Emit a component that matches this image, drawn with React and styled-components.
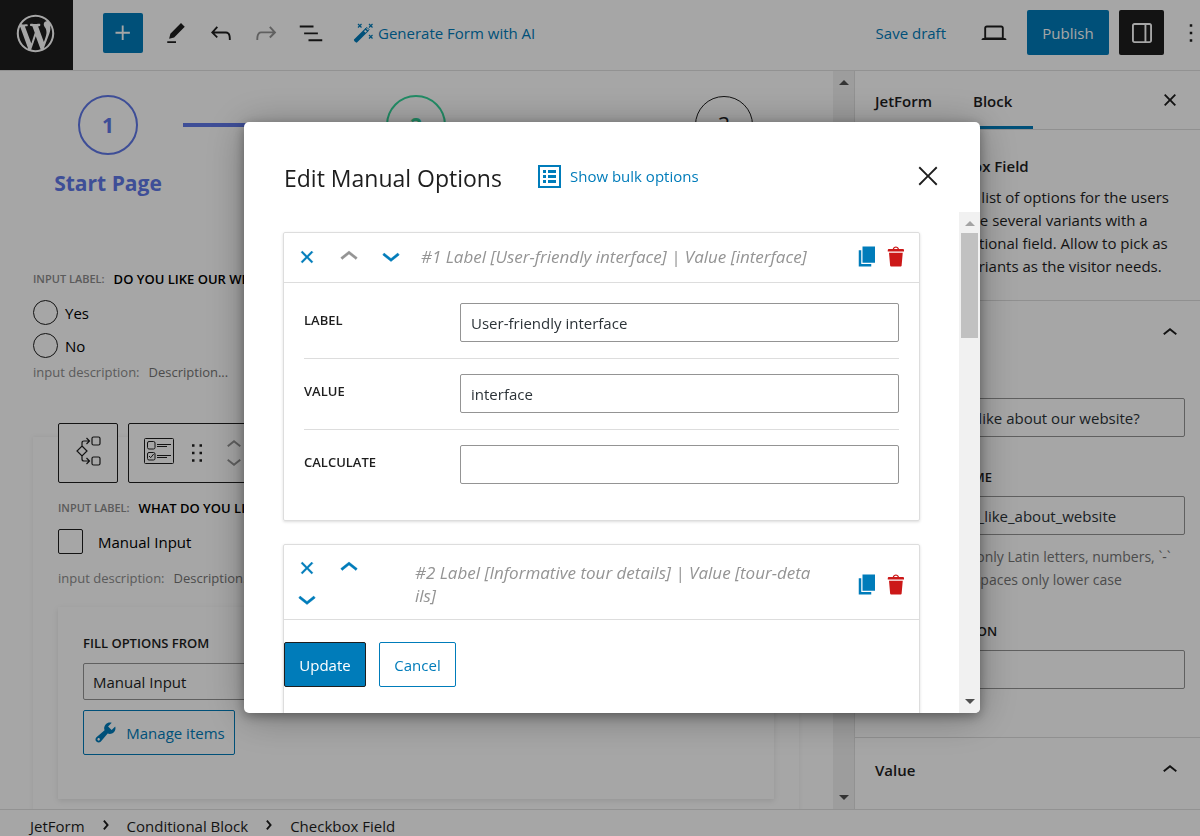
import { useState } from 'react';
import styled, { createGlobalStyle, css } from 'styled-components';

const icons = {
    wordpress: 'M20 10c0-5.51-4.49-10-10-10C4.48 0 0 4.49 0 10c0 5.52 4.48 10 10 10 5.51 0 10-4.48 10-10zM7.78 15.37L4.37 6.22c.55-.02 1.17-.08 1.17-.08.5-.06.44-1.13-.06-1.11 0 0-1.45.11-2.37.11-.18 0-.37 0-.58-.01C4.12 2.69 6.87 1.11 10 1.11c2.33 0 4.45.87 6.05 2.34-.68-.11-1.65.39-1.65 1.58 0 .74.45 1.36.9 2.1.35.61.55 1.36.55 2.46 0 1.49-1.4 5-1.4 5l-3.03-8.37c.54-.02.82-.17.82-.17.5-.05.44-1.25-.06-1.22 0 0-1.44.12-2.38.12-.87 0-2.33-.12-2.33-.12-.5-.03-.56 1.2-.06 1.22l.92.08 1.26 3.41zM17.41 10c.24-.64.74-1.87.43-4.25.7 1.29 1.05 2.71 1.05 4.25 0 3.29-1.73 6.24-4.4 7.78.97-2.59 1.94-5.2 2.92-7.78zM6.1 18.09C3.12 16.65 1.11 13.53 1.11 10c0-1.3.23-2.48.72-3.59C3.25 10.3 4.67 14.2 6.1 18.09zm4.03-6.63l2.58 6.98c-.86.29-1.76.45-2.71.45-.79 0-1.57-.11-2.29-.33.81-2.38 1.62-4.74 2.42-7.1z',
    plus: 'M11 12.5V17.5H12.5V12.5H17.5V11H12.5V6H11V11H6V12.5H11Z',
    pencil: 'm19 7-3-3-8.5 8.5-1 4 4-1L19 7Zm-7 11.5H5V20h7v-1.5Z',
    undo: 'M18.3 11.7c-.6-.6-1.4-.9-2.3-.9H6.7l2.9-3.3-1.1-1-4.5 5L8.5 16l1-1-2.7-2.7H16c.5 0 .9.2 1.3.5 1 1 1 3.4 1 4.5v.3h1.5v-.2c0-1.5 0-4.3-1.5-5.7z',
    redo: 'M15.6 6.5l-1.1 1 2.9 3.3H8c-.9 0-1.7.3-2.3.9-1.4 1.5-1.4 4.2-1.4 5.6v.2h1.5v-.3c0-1.1 0-3.5 1-4.5.3-.3.7-.5 1.3-.5h9.2L14.5 15l1.1 1.1 4.6-4.6-4.6-5z',
    listView: 'M3 6h11v1.5H3V6Zm3.5 5.5h11V13h-11v-1.5ZM21 17H10v1.5h11V17Z',
    laptop: 'M20.5 16h-.7V8c0-1.1-.9-2-2-2H6.2c-1.1 0-2 .9-2 2v8h-.7c-.8 0-1.5.7-1.5 1.5h20c0-.8-.7-1.5-1.5-1.5zM5.7 8c0-.3.2-.5.5-.5h11.6c.3 0 .5.2.5.5v7.6H5.7V8z',
    drawer: 'M18 4H6c-1.1 0-2 .9-2 2v12c0 1.1.9 2 2 2h12c1.1 0 2-.9 2-2V6c0-1.1-.9-2-2-2zm-4 14.5H6c-.3 0-.5-.2-.5-.5V6c0-.3.2-.5.5-.5h8v13zm4.5-.5c0 .3-.2.5-.5.5h-2.5v-13H18c.3 0 .5.2.5.5v12z',
    more: 'M13 19h-2v-2h2v2zm0-6h-2v-2h2v2zm0-6h-2V5h2v2z',
    closeSmall: 'M12 13.06l3.712 3.713 1.061-1.06L13.061 12l3.712-3.712-1.06-1.06L12 10.938 8.288 7.227l-1.061 1.06L10.939 12l-3.712 3.712 1.06 1.061L12 13.061z',
    close: 'm13.06 12 6.47-6.47-1.06-1.06L12 10.94 5.53 4.47 4.47 5.53 10.94 12l-6.47 6.47 1.06 1.06L12 13.06l6.47 6.47 1.06-1.06L13.06 12Z',
    up: 'M6.5 12.4L12 8l5.5 4.4-.9 1.2L12 10l-4.5 3.6-1-1.2z',
    down: 'M17.5 11.6L12 16l-5.5-4.4.9-1.2L12 14l4.5-3.6 1 1.2z',
    right: 'M10.86 8.04 14.28 12.03 10.86 16.02 9.72 15.04 12.3 12.03 9.72 9.02Z',
    drag: 'M8 7h2V5H8v2zm0 6h2v-2H8v2zm0 6h2v-2H8v2zm6-14v2h2V5h-2zm0 8h2v-2h-2v2zm0 6h2v-2h-2v2z',
    copy: 'M6 15V2h10v13H6zm-1 1h8v2H3V5h2v11z',
    trash: 'M12 4h3c.6 0 1 .4 1 1v1H3V5c0-.6.5-1 1-1h3c.2-1.1 1.3-2 2.5-2s2.3.9 2.5 2zM8 4h3c-.2-.6-.9-1-1.5-1S8.2 3.4 8 4zM4 7h11l-.9 10.1c0 .5-.5.9-1 .9H5.9c-.5 0-.9-.4-1-.9L4 7z',
    wrench: 'M16.68 9.77c-1.34 1.34-3.3 1.67-4.95.99l-5.41 6.52c-.99.99-2.59.99-3.58 0s-.99-2.59 0-3.57l6.52-5.42c-.68-1.65-.35-3.61.99-4.95 1.28-1.28 3.12-1.62 4.72-1.06l-2.89 2.89 2.82 2.82 2.86-2.87c.53 1.58.18 3.39-1.08 4.65zM3.81 16.21c.4.39 1.04.39 1.43 0 .4-.4.4-1.04 0-1.43-.39-.4-1.03-.4-1.43 0-.39.39-.39 1.03 0 1.43z',
};

function Icon({ name, size = 30, box = '0 0 24 24' }) {
    return (
        <Svg width={size} height={size} viewBox={box} aria-hidden="true">
            <path d={icons[name]} fillRule="evenodd" />
        </Svg>
    );
}

function WandIcon() {
    return (
        <Svg width="22" height="22" viewBox="0 0 22 22" aria-hidden="true">
            <path d="M1 17.6 12.6 6l3 3L4 20.6c-.8.6-3.8-2-3-3zM12.2 8 11 9.2l1.5 1.5L14 9.3z" fillRule="evenodd" />
            <path d="m12 7 2-1.5L16 7.5l-1.5 2" fill="none" stroke="currentColor" />
            <path
                d="m5 2 3.5 3.5m0-3.5L5 5.5M16 2l3.5 3.5m0-3.5L16 5.5M16 13l3.5 3.5m0-3.5L16 16.5"
                fill="none"
                stroke="currentColor"
                strokeWidth="1.2"
            />
        </Svg>
    );
}

function BulkIcon() {
    return (
        <Svg width="23" height="23" viewBox="0 0 23 23" aria-hidden="true">
            <path d="M0 0h23v23H0zM2 2v19h19V2zM5 5h3v3H5zM10 5h8v3h-8zM5 10h3v3H5zM10 10h8v3h-8zM5 15h3v3H5zM10 15h8v3h-8z" fillRule="evenodd" />
        </Svg>
    );
}

function BranchIcon() {
    return (
        <Svg width="26" height="30" viewBox="0 0 26 30" aria-hidden="true">
            <g fill="none" stroke="currentColor" strokeWidth="1.2">
                <path d="m6 10 5 5-5 5-5-5zM6 10V7q0-2 2-2h5M10.5 2 13.5 5l-3 3M6 20v3q0 2 2 2h5M10.5 22l3 3-3 3" />
                <rect x="16" y="1" width="8" height="8" rx="1.5" />
                <rect x="16" y="21" width="8" height="8" rx="1.5" />
            </g>
        </Svg>
    );
}

function CheckListIcon() {
    return (
        <Svg width="30" height="26" viewBox="0 0 30 26" aria-hidden="true">
            <g fill="none" stroke="currentColor">
                <rect x=".5" y=".5" width="29" height="25" rx="1" />
                <rect x="3.5" y="3.5" width="7.5" height="7.5" rx="1.5" />
                <rect x="3.5" y="14.5" width="7.5" height="7.5" rx="1.5" />
                <path d="m5 18 1.7 1.7 3-3.7M13 6.5h14M13 8.5h10M13 17.5h14M13 19.5h10" />
            </g>
        </Svg>
    );
}

function Scrollbar({ offset }) {
    return (
        <Track aria-hidden="true">
            <ArrowUp $muted={offset} />
            {offset && <Thumb />}
            <ArrowDown />
        </Track>
    );
}

function OptionRow({ id, label, value }) {
    const [text, setText] = useState(value);

    return (
        <Row>
            <FieldLabel htmlFor={id}>{label}</FieldLabel>
            <TextInput id={id} value={text} onChange={(e) => setText(e.target.value)} />
        </Row>
    );
}

function OptionCard({ title, first, stacked, children }) {
    return (
        <Card>
            <CardHead $stacked={stacked}>
                <Movers $stacked={stacked}>
                    <CardButton aria-label="Close item"><Icon name="closeSmall" /></CardButton>
                    <CardButton aria-label="Move up" disabled={first}><Icon name="up" size={36} /></CardButton>
                    <CardButton aria-label="Move down"><Icon name="down" size={36} box="0 1 24 24" /></CardButton>
                </Movers>
                <CardTitle>{title}</CardTitle>
                <CardActions>
                    <ActionButton aria-label="Clone"><Icon name="copy" size={25} box="0 0 20 20" /></ActionButton>
                    <ActionButton aria-label="Delete" $danger><Icon name="trash" size={25} box="0 0 20 20" /></ActionButton>
                </CardActions>
            </CardHead>
            <CardBody>{children}</CardBody>
        </Card>
    );
}

function Modal() {
    return (
        <Overlay>
            <Dialog role="dialog" aria-label="Edit Manual Options">
                <DialogHead>
                    <DialogTitle>Edit Manual Options</DialogTitle>
                    <BulkButton><BulkIcon /> Show bulk options</BulkButton>
                    <CloseButton aria-label="Close"><Icon name="close" /></CloseButton>
                </DialogHead>
                <DialogMain>
                    <DialogScroll>
                        <OptionCard title="#1 Label [User-friendly interface] | Value [interface]" first>
                            <OptionRow id="label1" label="Label" value="User-friendly interface" />
                            <OptionRow id="value1" label="Value" value="interface" />
                            <OptionRow id="calc1" label="Calculate" value="" />
                        </OptionCard>
                        <OptionCard title="#2 Label [Informative tour details] | Value [tour-details]" stacked />
                    </DialogScroll>
                    <Scrollbar offset />
                </DialogMain>
                <DialogButtons>
                    <PrimaryButton $outlined>Update</PrimaryButton>
                    <SecondaryButton>Cancel</SecondaryButton>
                </DialogButtons>
            </Dialog>
        </Overlay>
    );
}

function Header() {
    return (
        <TopBar>
            <Logo href="#" aria-label="View posts"><Icon name="wordpress" size={45} box="-2 -2 24 24" /></Logo>
            <AddButton aria-label="Add block"><Icon name="plus" /></AddButton>
            <ToolButton aria-label="Tools"><Icon name="pencil" /></ToolButton>
            <ToolButton aria-label="Undo"><Icon name="undo" /></ToolButton>
            <ToolButton aria-label="Redo" disabled><Icon name="redo" /></ToolButton>
            <ToolButton aria-label="Document overview"><Icon name="listView" /></ToolButton>
            <TextButton $left><WandIcon /> Generate Form with AI</TextButton>
            <TopRight>
                <TextButton>Save draft</TextButton>
                <PreviewButton aria-label="Preview"><Icon name="laptop" /></PreviewButton>
                <PrimaryButton>Publish</PrimaryButton>
                <PanelButton aria-label="Settings"><Icon name="drawer" /></PanelButton>
                <MoreButton aria-label="Options"><Icon name="more" /></MoreButton>
            </TopRight>
        </TopBar>
    );
}

function Canvas() {
    return (
        <CanvasWrap>
            <CanvasContent>
                <Steps>
                    <Step $color="#6078e8">
                        <StepCircle $bold>1</StepCircle>
                        Start Page
                    </Step>
                    <StepLine $color="#6078e8" />
                    <Step $color="#34d79c"><StepCircle $bold>2</StepCircle></Step>
                    <StepLine $color="#34d79c" />
                    <Step $color="#1e1e1e"><StepCircle>3</StepCircle></Step>
                </Steps>
                <RadioField>
                    <BlockLabel><small>INPUT LABEL:</small> DO YOU LIKE OUR WEBSITE?</BlockLabel>
                    <Choice><Check type="radio" name="like" /> Yes</Choice>
                    <Choice><Check type="radio" name="like" /> No</Choice>
                    <Description><span>input description:</span> Description...</Description>
                </RadioField>
                <Conditional>
                    <BlockTools>
                        <ToolGroup $single><BlockButton aria-label="Select parent"><BranchIcon /></BlockButton></ToolGroup>
                        <ToolGroup>
                            <BlockButton aria-label="Checkbox Field"><CheckListIcon /></BlockButton>
                            <DragButton aria-label="Drag"><Icon name="drag" /></DragButton>
                            <MoveColumn>
                                <MoveButton aria-label="Move up" disabled><Icon name="up" /></MoveButton>
                                <MoveButton aria-label="Move down" disabled><Icon name="down" /></MoveButton>
                            </MoveColumn>
                        </ToolGroup>
                    </BlockTools>
                    <BlockLabel><small>INPUT LABEL:</small> WHAT DO YOU LIKE ABOUT OUR WEBSITE?</BlockLabel>
                    <Choice $wide><Check type="checkbox" /> Manual Input</Choice>
                    <Description><span>input description:</span> Description...</Description>
                    <OptionsBox>
                        <FieldLabel htmlFor="source">Fill options from</FieldLabel>
                        <Select id="source"><option>Manual Input</option></Select>
                        <ManageButton><Icon name="wrench" size={25} box="0 0 20 20" /> Manage items</ManageButton>
                    </OptionsBox>
                </Conditional>
            </CanvasContent>
            <Scrollbar />
        </CanvasWrap>
    );
}

function Sidebar() {
    return (
        <Aside>
            <Tabs>
                <Tab>JetForm</Tab>
                <Tab $active>Block</Tab>
                <TabClose aria-label="Close settings"><Icon name="closeSmall" /></TabClose>
            </Tabs>
            <BlockCard>
                <CheckListIcon />
                <div>
                    <h2>Checkbox Field</h2>
                    <p>
                        Give the list of options for the users<br />
                        to choose several variants with a<br />
                        multi-optional field. Allow to pick as<br />
                        many variants as the visitor needs.
                    </p>
                </div>
            </BlockCard>
            <Panel>
                <PanelHead>General <Icon name="up" /></PanelHead>
                <PanelField>
                    <FieldLabel htmlFor="fieldLabel">Field label</FieldLabel>
                    <TextInput id="fieldLabel" defaultValue="What do you like about our website?" />
                </PanelField>
                <PanelField>
                    <FieldLabel htmlFor="fieldName">Form field name</FieldLabel>
                    <TextInput id="fieldName" defaultValue="what_do_you_like_about_website" />
                    <p>
                        Should contain only Latin letters, numbers, `-`<br />
                        or `_` chars, no spaces only lower case
                    </p>
                </PanelField>
                <PanelField>
                    <FieldLabel htmlFor="fieldDesc">Field description</FieldLabel>
                    <TextInput id="fieldDesc" />
                </PanelField>
            </Panel>
            <Panel>
                <PanelHead>Value <Icon name="up" /></PanelHead>
            </Panel>
        </Aside>
    );
}

export default function App() {
    return (
        <>
            <GlobalStyle />
            <Page>
                <Header />
                <Workspace>
                    <Canvas />
                    <Sidebar />
                </Workspace>
                <Breadcrumbs aria-label="Block breadcrumb">
                    <a href="#">JetForm</a>
                    <Icon name="right" />
                    <a href="#">Conditional Block</a>
                    <Icon name="right" />
                    <span>Checkbox Field</span>
                </Breadcrumbs>
            </Page>
            <Modal />
        </>
    );
}

const GlobalStyle = createGlobalStyle`
    *, *::before, *::after {
        box-sizing: border-box;
    }

    body {
        margin: 0;
        background: #fff;
        color: #1e1e1e;
        font-family: "Segoe UI", "Open Sans", "Noto Sans", sans-serif;
        font-size: 15px;
        overflow: hidden;
    }

    button, input, select {
        font: inherit;
        color: inherit;
    }

    h1, h2, p {
        margin: 0;
    }
`;

const Svg = styled.svg`
    display: block;
    flex: none;
    fill: currentColor;
`;

const Page = styled.div`
    display: flex;
    flex-direction: column;
    height: 100vh;
`;

const TopBar = styled.header`
    display: flex;
    align-items: center;
    flex: none;
    height: 71px;
    padding-bottom: 5px;
    border-bottom: 1px solid #e0e0e0;
    overflow: hidden;
`;

const Button = styled.button`
    display: flex;
    align-items: center;
    justify-content: center;
    flex: none;
    padding: 0;
    border: 0;
    border-radius: 2px;
    background: none;
    white-space: nowrap;
`;

const Logo = styled.a`
    display: flex;
    align-items: center;
    justify-content: center;
    align-self: flex-start;
    width: 73px;
    height: 71px;
    margin-right: 30px;
    padding: 0 2px 4px 0;
    background: #1e1e1e;
    color: #fff;
`;

const AddButton = styled(Button)`
    width: 40px;
    height: 40px;
    margin-right: 10px;
    background: #007cba;
    color: #fff;
`;

const ToolButton = styled(Button)`
    width: 45px;
    height: 45px;

    &:disabled {
        color: #949494;
    }
`;

const TextButton = styled(Button)`
    gap: 3px;
    margin-left: ${(props) => (props.$left ? '20px' : '0')};
    color: #007cba;
`;

const TopRight = styled.div`
    display: flex;
    align-items: center;
    margin-left: auto;
`;

const PreviewButton = styled(ToolButton)`
    margin: 0 11px 0 25px;
`;

const PrimaryButton = styled(Button)`
    width: 82px;
    height: 45px;
    padding-top: 1px;
    border: ${(props) => (props.$outlined ? '1px solid #1e1e1e' : '0')};
    background: #007cba;
    color: #fff;
`;

const SecondaryButton = styled(Button)`
    width: 77px;
    height: 45px;
    padding-top: 1px;
    border: 1px solid #007cba;
    background: #fff;
    color: #007cba;
`;

const PanelButton = styled(ToolButton)`
    margin-left: 10px;
    background: #1e1e1e;
    color: #fff;
`;

const MoreButton = styled(Button)`
    justify-content: flex-start;
    width: 36px;
    height: 45px;
    padding-left: 12px;
    overflow: hidden;
`;

const Workspace = styled.div`
    display: flex;
    flex: 1;
    min-height: 0;
`;

const CanvasWrap = styled.main`
    display: flex;
    flex: 1;
    min-width: 0;
    overflow: hidden;
`;

const CanvasContent = styled.div`
    flex: 1;
    min-width: 0;
    padding: 24px 34px 0 33px;
`;

const Track = styled.div`
    display: flex;
    flex-direction: column;
    align-items: center;
    flex: none;
    width: 21px;
    padding: 9px 0;
    background: #f1f1f1;
`;

const ArrowUp = styled.span`
    border: 5px solid transparent;
    border-top: 0;
    border-bottom-color: ${(props) => (props.$muted ? '#a3a3a3' : '#505050')};
`;

const ArrowDown = styled.span`
    margin-top: auto;
    border: 5px solid transparent;
    border-bottom: 0;
    border-top-color: #505050;
`;

const Thumb = styled.span`
    width: 17px;
    height: 105px;
    margin-top: 7px;
    background: #c1c1c1;
`;

const Steps = styled.div`
    display: flex;
    align-items: flex-start;
    padding: 0 21px;
`;

const Step = styled.div`
    display: flex;
    flex-direction: column;
    align-items: center;
    gap: 12px;
    flex: none;
    width: 108px;
    color: ${(props) => props.$color};
    font-size: 21px;
    font-weight: 700;
    line-height: 32px;
    white-space: nowrap;
`;

const StepCircle = styled.span`
    display: flex;
    align-items: center;
    justify-content: center;
    width: ${(props) => (props.$bold ? '60px' : '58px')};
    height: ${(props) => (props.$bold ? '60px' : '58px')};
    margin: ${(props) => (props.$bold ? '0' : '1px')};
    border: ${(props) => (props.$bold ? '2px' : '1px')} solid currentColor;
    border-radius: 50%;
    font-weight: ${(props) => (props.$bold ? 700 : 400)};
`;

const StepLine = styled.span`
    flex: 1;
    height: 4px;
    margin: 28px 21px 0;
    background: ${(props) => props.$color};
`;

const BlockLabel = styled.div`
    display: flex;
    align-items: center;
    gap: 9px;
    color: #000;
    font-size: 13px;
    font-weight: 600;
    line-height: 20px;
    white-space: nowrap;

    small {
        color: #8c8c8c;
        font-size: 11px;
    }
`;

const RadioField = styled.div`
    display: flex;
    flex-direction: column;
    margin-top: 70px;

    ${BlockLabel} {
        margin-bottom: 3px;
    }
`;

const Choice = styled.label`
    display: flex;
    align-items: center;
    gap: ${(props) => (props.$wide ? '15px' : '7px')};
    height: 25px;
    margin: ${(props) => (props.$wide ? '11px 0 14px' : '8px 0 0')};
    color: #000;
`;

const Check = styled.input`
    appearance: none;
    width: 25px;
    height: 25px;
    margin: 0;
    border: 1px solid #1e1e1e;
    border-radius: ${(props) => (props.type === 'radio' ? '50%' : '2px')};
`;

const Description = styled.div`
    display: flex;
    gap: 9px;
    margin-top: 4px;
    color: #757575;
    font-size: 13px;
    line-height: 20px;

    span {
        color: #8c8c8c;
    }
`;

const Conditional = styled.section`
    position: relative;
    height: 400px;
    margin-top: 55px;
    padding: 61px 25px 25px;
    box-shadow: 0 0 5px rgba(0, 0, 0, .08);
`;

/* floats over the top edge of the selected block */
const BlockTools = styled.div`
    position: absolute;
    top: -14px;
    left: 25px;
    display: flex;
    gap: 10px;
`;

const ToolGroup = styled.div`
    display: flex;
    align-items: center;
    width: ${(props) => (props.$single ? '60px' : '240px')};
    height: 60px;
    border: 1px solid #1e1e1e;
    border-radius: 2px;
    background: #fff;
`;

const BlockButton = styled(Button)`
    width: 60px;
    height: 56px;
    padding-bottom: 4px;
`;

const DragButton = styled(Button)`
    width: 30px;
    margin-right: 2px;
    margin-left: -7px;
`;

const MoveColumn = styled.div`
    display: flex;
    flex-direction: column;
`;

const MoveButton = styled(Button)`
    width: 40px;
    height: 16px;

    &:disabled {
        color: #949494;
    }
`;

const OptionsBox = styled.div`
    display: flex;
    flex-direction: column;
    align-items: flex-start;
    margin-top: 19px;
    padding: 26px 25px 44px;
    box-shadow: 0 2px 6px rgba(0, 0, 0, .1);
`;

const FieldLabel = styled.label`
    font-size: 13px;
    font-weight: 600;
    line-height: 20px;
    text-transform: uppercase;
    white-space: nowrap;
`;

const Select = styled.select`
    appearance: none;
    width: 100%;
    height: 37px;
    margin: 10px 0;
    padding: 0 9px;
    border: 1px solid #949494;
    border-radius: 2px;
    background: #fff;
`;

const ManageButton = styled(Button)`
    gap: 8px;
    width: 152px;
    height: 45px;
    border: 1px solid #007cba;
    color: #007cba;
`;

const Aside = styled.aside`
    flex: none;
    width: 346px;
    border-left: 1px solid #e0e0e0;
    overflow: hidden;
`;

const Tabs = styled.div`
    display: flex;
    height: 59px;
    border-bottom: 1px solid #ddd;
`;

const Tab = styled(Button)`
    padding: 1px 21px 0 20px;
    border-radius: 0;
    font-weight: 600;
    ${(props) => props.$active && css`
        box-shadow: inset 0 -3px #007cba;
    `}
`;

const TabClose = styled(Button)`
    width: 30px;
    margin: 0 15px 0 auto;
`;

const BlockCard = styled.div`
    display: flex;
    gap: 15px;
    height: 170px;
    padding: 25px 20px;

    h2 {
        font-size: 15px;
        font-weight: 600;
        line-height: 22px;
    }

    p {
        margin-top: 9px;
        line-height: 23px;
        white-space: nowrap;
    }
`;

const Panel = styled.section`
    padding: 0 15px 48px 20px;
    border-top: 1px solid #ddd;
`;

const PanelHead = styled.h2`
    display: flex;
    align-items: center;
    justify-content: space-between;
    height: 60px;
    padding-top: 3px;
    font-size: 15px;
    font-weight: 600;
`;

const PanelField = styled.div`
    display: flex;
    flex-direction: column;
    gap: 9px;
    padding-top: 8px;

    & + & {
        padding-top: 30px;
    }

    p {
        margin: 1px 0 0;
        color: #757575;
        font-size: 14px;
        line-height: 23px;
        white-space: nowrap;
    }
`;

const TextInput = styled.input`
    width: 100%;
    height: 39px;
    padding: 1px 10px;
    border: 1px solid #949494;
    border-radius: 2px;
    background: #fff;
    color: #2c3338;
    outline: 0;
`;

const Breadcrumbs = styled.nav`
    display: flex;
    align-items: flex-start;
    flex: none;
    gap: 6px;
    height: 27px;
    padding: 0 30px;
    border-top: 1px solid #e0e0e0;
    line-height: 33px;
    overflow: hidden;

    a {
        color: inherit;
        text-decoration: none;
    }
`;

const Overlay = styled.div`
    position: fixed;
    inset: 0;
    display: flex;
    align-items: center;
    justify-content: center;
    padding: 0 0 1px 24px;
    background: rgba(0, 0, 0, .35);
`;

const Dialog = styled.div`
    position: relative;
    display: flex;
    flex-direction: column;
    width: 736px;
    max-width: 96%;
    max-height: calc(100vh - 245px);
    border-radius: 5px;
    background: #fff;
    box-shadow: 0 3px 12px rgba(0, 0, 0, .35), 0 4px 40px rgba(0, 0, 0, .3);
    overflow: hidden;
`;

const DialogHead = styled.div`
    display: flex;
    align-items: center;
    flex: none;
    height: 90px;
    padding: 18px 37px 0 40px;
`;

const DialogTitle = styled.h1`
    margin-right: 36px;
    padding-top: 3px;
    font-size: 23px;
    font-weight: 500;
    white-space: nowrap;
    -webkit-text-stroke: 0;
`;

const BulkButton = styled(Button)`
    gap: 9px;
    color: #007cba;
`;

const CloseButton = styled(Button)`
    width: 30px;
    height: 30px;
    margin-left: auto;
`;

const DialogMain = styled.div`
    display: flex;
    min-height: 0;
`;

const DialogScroll = styled.div`
    display: flex;
    flex-direction: column;
    flex: 1;
    gap: 23px;
    min-width: 0;
    padding: 20px 39px;
    overflow: auto;
    scrollbar-width: none;
`;

/* stays in view above the scrolled cards */
const DialogButtons = styled.div`
    position: absolute;
    bottom: 26px;
    left: 40px;
    display: flex;
    gap: 13px;
`;

const Card = styled.section`
    flex: none;
    border: 1px solid #ddd;
    border-radius: 2px;
    box-shadow: 0 1px 3px rgba(0, 0, 0, .14);
`;

const CardHead = styled.div`
    display: flex;
    align-items: center;
    gap: 17px;
    min-height: 50px;
    padding: ${(props) => (props.$stacked ? '10px 10px 6px' : '0 10px 2px')};
    border-bottom: 1px solid #ddd;
`;

const Movers = styled.div`
    display: flex;
    flex-wrap: wrap;
    flex: none;
    gap: 6px 16px;
    width: ${(props) => (props.$stacked ? '104px' : 'auto')};
`;

const CardButton = styled(Button)`
    width: 26px;
    height: 26px;
    color: #007cba;

    &:disabled {
        color: #949494;
    }

    ${Svg} {
        stroke: currentColor;
        stroke-width: .3;
    }
`;

const CardTitle = styled.p`
    flex: 1;
    max-width: 398px;
    color: #949494;
    font-size: 17px;
    font-style: italic;
    line-height: 23px;
    word-break: break-all;
`;

const CardActions = styled.div`
    display: flex;
    gap: 4px;
    margin-left: auto;
`;

const ActionButton = styled(Button)`
    color: ${(props) => (props.$danger ? '#cc1818' : '#007cba')};
`;

const CardBody = styled.div`
    min-height: 200px;
    padding: 5px 20px 20px;
`;

const Row = styled.div`
    display: grid;
    grid-template-columns: 156px 1fr;
    padding: 15px 0 16px;

    & + & {
        border-top: 1px solid #ddd;
    }

    ${FieldLabel} {
        padding-top: 7px;
    }
`;
